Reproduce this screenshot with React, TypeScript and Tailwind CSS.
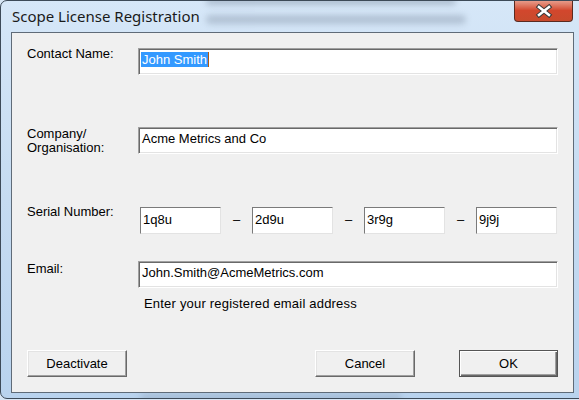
import React from "react";

const sunken =
  "border border-t-[#a0a0a0] border-l-[#a0a0a0] border-b-white border-r-white shadow-[inset_1px_1px_0_#696969,inset_-1px_-1px_0_#e3e3e3] bg-white";

const label = "text-[13px] leading-[14px] text-black";

function Field({ children }: { children?: React.ReactNode }) {
  return (
    <div className={`flex-1 h-[27px] ${sunken} pl-[2px] pt-[3px] text-[13px] leading-[15px] text-black whitespace-nowrap`}>
      {children}
    </div>
  );
}

function SerialBox({ value }: { value: string }) {
  return (
    <div className="w-[81px] h-[27px] border border-t-[#7a7a7a] border-l-[#7a7a7a] border-b-[#e3e3e3] border-r-[#e3e3e3] bg-white pl-[2px] pt-[4px] text-[13px] leading-[15px] text-black">
      {value}
    </div>
  );
}

function Dash() {
  return <div className="w-[31px] flex justify-center text-[13px] leading-[14px] pt-[6px] text-black">–</div>;
}

function Button({ children, primary, className }: { children: React.ReactNode; primary?: boolean; className?: string }) {
  const base = primary
    ? "border border-[#555555] shadow-[inset_1px_1px_0_#ffffff,inset_-1px_-1px_0_#696969,inset_-2px_-2px_0_#a0a0a0]"
    : "border border-t-white border-l-white border-b-[#696969] border-r-[#696969] shadow-[inset_-1px_-1px_0_#a0a0a0,inset_1px_1px_0_#e3e3e3]";
  return (
    <div className={`h-[27px] bg-[#f0f0f0] flex items-center justify-center text-[13px] text-black ${base} ${className ?? ""}`}>
      {children}
    </div>
  );
}

function CloseIcon() {
  return (
    <svg width="18" height="14" viewBox="0 0 18 14">
      <g strokeLinecap="square">
        <line x1="4" y1="3" x2="14" y2="11" stroke="#3a3a3a" strokeWidth="4.6" />
        <line x1="14" y1="3" x2="4" y2="11" stroke="#3a3a3a" strokeWidth="4.6" />
        <line x1="4" y1="3" x2="14" y2="11" stroke="#ffffff" strokeWidth="2.6" />
        <line x1="14" y1="3" x2="4" y2="11" stroke="#ffffff" strokeWidth="2.6" />
      </g>
    </svg>
  );
}

export default function App() {
  return (
    <div
      className="w-[579px] h-[400px] overflow-hidden bg-[#d7e6f5] relative"
      style={{ fontFamily: '"Liberation Sans", Arial, sans-serif' }}
    >
      <div className="relative w-[592px] h-[399px] rounded-[7px] border border-[#3d4a58] bg-gradient-to-b from-[#d6e7f8] via-[#c5dbf1] to-[#b9d3ee] overflow-hidden flex flex-col">
        {/* blurred background shapes seen through the glass frame */}
        <div className="absolute left-[205px] top-[-4px] w-[250px] h-[8px] rounded-full bg-[#7d8ca0] opacity-45 blur-[3px] pointer-events-none" />
        <div className="absolute left-[205px] top-[14px] w-[260px] h-[9px] rounded-full bg-[#7d8ca0] opacity-40 blur-[3px] pointer-events-none" />
        <div className="absolute left-[140px] top-[392px] w-[260px] h-[10px] bg-[#8fa3ba] opacity-40 blur-[3px] pointer-events-none" />

        {/* Title bar */}
        <div className="relative h-[31px] flex justify-between items-start">
          <div
            className="pl-[11px] pt-[5px] text-[15px] leading-[20px] text-[#1a1a1a]"
            style={{ fontFamily: '"Noto Sans", "Open Sans", sans-serif' }}
          >
            Scope License Registration
          </div>
          <div className="mr-[18px] mt-[-1px] w-[59px] h-[22px] rounded-b-[4px] border border-[#5a2a20] border-t-0 bg-gradient-to-b from-[#e8a393] via-[#d2472d] to-[#c84a2c] shadow-[inset_0_1px_0_#f3c1b4] flex items-center justify-center">
            <CloseIcon />
          </div>
        </div>

        {/* Client area */}
        <div className="relative ml-[10px] w-[563px] h-[361px] border border-[#5f6b78] bg-[#f0f0f0] flex flex-col pl-[15px] pr-[15px] pt-[15px] pb-[15px]">
          {/* Contact name */}
          <div className="flex items-start">
            <div className={`${label} w-[111px] mt-[-1px]`}>Contact Name:</div>
            <Field>
              <span className="bg-[#3399ff] text-white px-[1px]">John Smith</span>
              <span className="inline-block w-[1px] h-[15px] bg-[#b05a10] align-top" />
            </Field>
          </div>

          {/* Company */}
          <div className="flex items-start mt-[52px]">
            <div className={`${label} w-[111px]`}>
              Company/
              <br />
              Organisation:
            </div>
            <Field>
              <span className="pl-[1px]">Acme Metrics and Co</span>
            </Field>
          </div>

          {/* Serial */}
          <div className="flex items-start mt-[52px]">
            <div className={`${label} w-[113px] mt-[-2px]`}>Serial Number:</div>
            <div className="flex items-start">
              <SerialBox value="1q8u" />
              <Dash />
              <SerialBox value="2d9u" />
              <Dash />
              <SerialBox value="3r9g" />
              <Dash />
              <SerialBox value="9j9j" />
            </div>
          </div>

          {/* Email */}
          <div className="flex items-start mt-[27px]">
            <div className={`${label} w-[111px] mt-[1px]`}>Email:</div>
            <Field>
              <span className="pl-[1px]">John.Smith@AcmeMetrics.com</span>
            </Field>
          </div>
          <div className={`${label} ml-[117px] mt-[9px] tracking-[0.2px]`}>Enter your registered email address</div>

          {/* Buttons */}
          <div className="mt-auto flex items-center">
            <Button className="w-[100px]">Deactivate</Button>
            <Button className="w-[100px] ml-auto">Cancel</Button>
            <Button primary className="w-[99px] ml-[44px]">
              OK
            </Button>
          </div>
        </div>
      </div>
    </div>
  );
}
